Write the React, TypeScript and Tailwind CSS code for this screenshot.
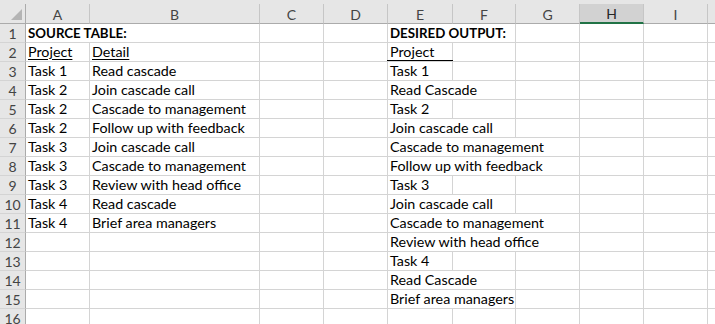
import React from 'react';

type Cell = { col: number; text: string; span?: number; bold?: boolean; underline?: boolean; boxBottom?: boolean };

// column indexes: 0=A ... 9=J
const COLS = ['A', 'B', 'C', 'D', 'E', 'F', 'G', 'H', 'I', 'J'];
const SELECTED = 'H';

const ROWS: Cell[][] = [
  [{ col: 0, text: 'SOURCE TABLE:', span: 2, bold: true }, { col: 4, text: 'DESIRED OUTPUT:', span: 2, bold: true }],
  [{ col: 0, text: 'Project', underline: true }, { col: 1, text: 'Detail', underline: true }, { col: 4, text: 'Project', boxBottom: true }],
  [{ col: 0, text: 'Task 1' }, { col: 1, text: 'Read cascade' }, { col: 4, text: 'Task 1' }],
  [{ col: 0, text: 'Task 2' }, { col: 1, text: 'Join cascade call' }, { col: 4, text: 'Read Cascade', span: 2 }],
  [{ col: 0, text: 'Task 2' }, { col: 1, text: 'Cascade to management' }, { col: 4, text: 'Task 2' }],
  [{ col: 0, text: 'Task 2' }, { col: 1, text: 'Follow up with feedback' }, { col: 4, text: 'Join cascade call', span: 2 }],
  [{ col: 0, text: 'Task 3' }, { col: 1, text: 'Join cascade call' }, { col: 4, text: 'Cascade to management', span: 3 }],
  [{ col: 0, text: 'Task 3' }, { col: 1, text: 'Cascade to management' }, { col: 4, text: 'Follow up with feedback', span: 3 }],
  [{ col: 0, text: 'Task 3' }, { col: 1, text: 'Review with head office' }, { col: 4, text: 'Task 3' }],
  [{ col: 0, text: 'Task 4' }, { col: 1, text: 'Read cascade' }, { col: 4, text: 'Join cascade call', span: 2 }],
  [{ col: 0, text: 'Task 4' }, { col: 1, text: 'Brief area managers' }, { col: 4, text: 'Cascade to management', span: 3 }],
  [{ col: 4, text: 'Review with head office', span: 3 }],
  [{ col: 4, text: 'Task 4' }],
  [{ col: 4, text: 'Read Cascade', span: 2 }],
  [{ col: 4, text: 'Brief area managers', span: 2 }],
  [],
];

const GRID = 'grid grid-cols-[26px_64px_170px_64px_64px_65px_63px_64px_64px_64px_64px]';
const SPAN: Record<number, string> = { 1: '', 2: 'col-span-2', 3: 'col-span-3' };

function SheetRow({ num, cells }: { num: number; cells: Cell[] }) {
  const out: React.ReactNode[] = [];
  let c = 0;
  while (c < COLS.length) {
    const cell = cells.find((x) => x.col === c);
    const span = cell?.span ?? 1;
    out.push(
      <div
        key={c}
        className={`${SPAN[span]} h-[19px] border-r border-b border-[#d4d4d4] bg-white flex items-end pl-[2px] pb-[2px] whitespace-nowrap overflow-hidden`}
      >
        {cell && (
          <span
            className={`leading-[14px] text-black ${cell.bold ? 'font-bold text-[13.3px]' : 'text-[14.3px]'} ${cell.underline ? 'underline underline-offset-2' : ''}`}
          >
            {cell.text}
          </span>
        )}
      </div>
    );
    c += span;
  }
  const hasBox = cells.some((x) => x.boxBottom);
  return (
    <div className={`${GRID} relative`}>
      <div className="h-[19px] border-r border-b border-r-[#ababab] border-b-[#d4d4d4] bg-[#e6e6e6] flex items-end justify-center pb-[1px] text-[#444] leading-[14px]">
        {num}
      </div>
      {out}
      {hasBox && <div className="absolute left-[387px] top-[17px] w-[66px] h-[1px] bg-black" />}
    </div>
  );
}

export default function App() {
  return (
    <div className="w-[715px] h-[324px] overflow-hidden bg-[#e6e6e6] text-[14px] font-['Lato',sans-serif]">
      <div className="h-[4px] bg-[#e6e6e6]" />
      <div className={GRID}>
        <div className="relative h-[20px] border-r border-b border-[#ababab] bg-[#e6e6e6]">
          <svg className="absolute right-[3px] bottom-[3px]" width="11" height="11" viewBox="0 0 11 11">
            <polygon points="11,0 11,11 0,11" fill="#b4b4b4" />
          </svg>
        </div>
        {COLS.map((k) => (
          <div
            key={k}
            className={`h-[20px] border-r border-r-[#c6c6c6] flex items-end justify-center pb-[1px] leading-[14px] ${
              k === SELECTED ? 'bg-[#d2d2d2] border-b-2 border-b-[#217346] text-[#262626]' : 'bg-[#e6e6e6] border-b border-b-[#ababab] text-[#444]'
            }`}
          >
            {k}
          </div>
        ))}
      </div>
      {ROWS.map((cells, i) => (
        <SheetRow key={i} num={i + 1} cells={cells} />
      ))}
    </div>
  );
}
